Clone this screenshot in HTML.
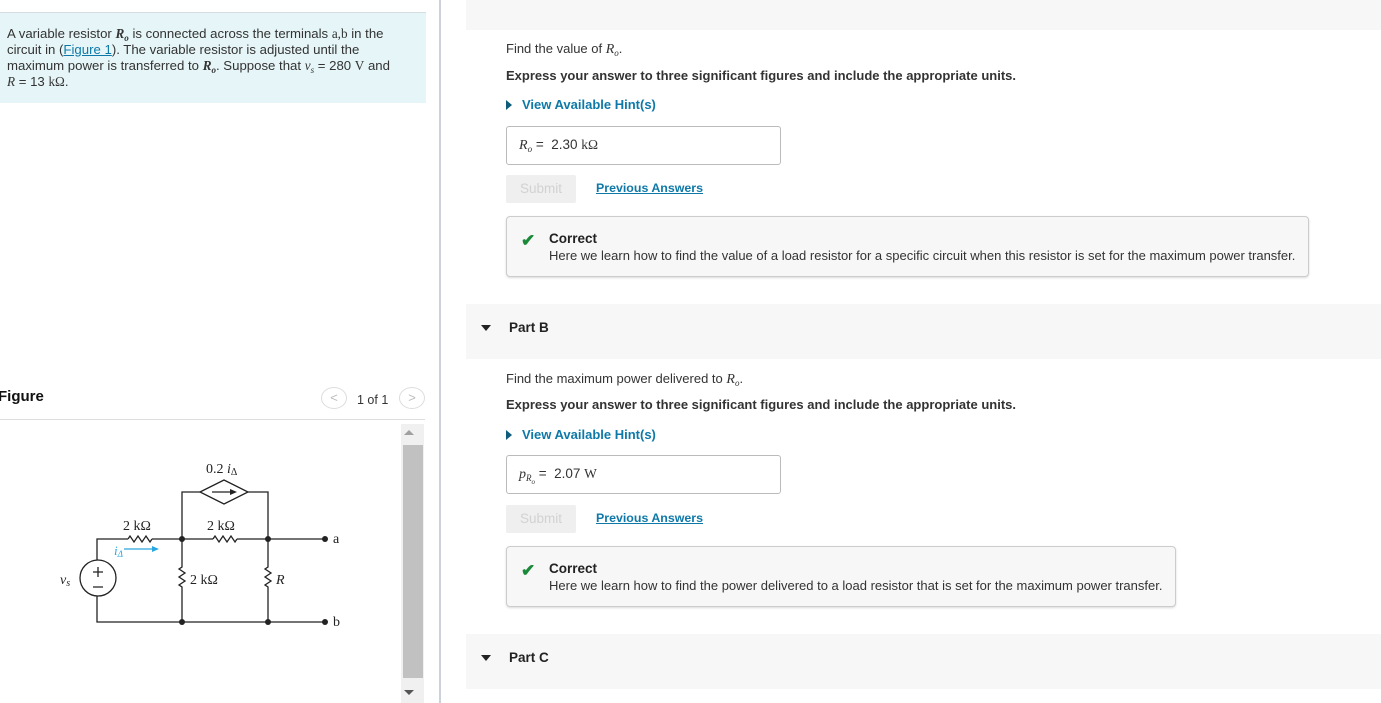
<!DOCTYPE html>
<html><head><meta charset="utf-8"><style>
*{margin:0;padding:0;box-sizing:border-box}
body{width:1381px;height:703px;overflow:hidden;background:#fff;font-family:"Liberation Sans",Arial,sans-serif;color:#333;position:relative}
sub{line-height:0;vertical-align:-3px}
.a{position:absolute;white-space:nowrap}
.m{font-family:"Liberation Serif",serif;font-style:italic}
.ms{font-family:"Liberation Serif",serif}
.intro{position:absolute;left:0;top:12px;width:426px;height:91px;background:#e6f5f7;border-top:1px solid #d5dde0;padding:13px 0 0 7px;font-size:13.2px;line-height:16px;color:#333;white-space:nowrap}
.intro a{color:#0e79a8}
.div{position:absolute;left:439px;top:0;width:2px;height:703px;background:#ccd2da}
.ph{position:absolute;left:466px;width:915px;background:#f7f7f7}
.ph b{position:absolute;left:43px;font-size:13.5px;color:#222}
.tri{position:absolute;left:15px;width:0;height:0;border-left:5px solid transparent;border-right:5px solid transparent;border-top:6px solid #222}
.t{font-size:13px;color:#333}
.bold{font-weight:bold;font-size:13px;color:#333}
.hint{font-size:13px;font-weight:bold;color:#0e79a8}
.hint:before{content:"";display:inline-block;border-top:5px solid transparent;border-bottom:5px solid transparent;border-left:6px solid #0e5c7a;margin-right:10px;vertical-align:-1px}
.inp{position:absolute;left:506px;width:275px;height:39px;border:1px solid #bbb;border-radius:3px;font-size:13.5px;padding:10px 0 0 12px;color:#333}
.sub{position:absolute;left:506px;width:70px;height:28px;background:#efefef;border-radius:2px;color:#d2d2d2;font-size:13.5px;text-align:center;line-height:28px}
.prev{position:absolute;left:596px;font-size:12.4px;font-weight:bold;color:#0e79a8;text-decoration:underline}
.fb{position:absolute;left:506px;height:61px;background:#f7f7f7;border:1px solid #ccc;border-radius:4px;box-shadow:0 1px 2px rgba(0,0,0,.15)}
.fb .ck{position:absolute;left:14px;top:14px;color:#1a8a3a;font-size:17px;font-weight:bold}
.fb b{position:absolute;left:42px;top:14px;font-size:13.5px;color:#222}
.fb span{position:absolute;left:42px;top:31px;font-size:13px;color:#333;white-space:nowrap}
</style></head><body>
<div class="intro">A variable resistor <span class="m" style="font-weight:bold">R<sub style="font-size:9px">o</sub></span> is connected across the terminals <span class="ms">a,b</span> in the<br>circuit in (<a href="#">Figure 1</a>). The variable resistor is adjusted until the<br>maximum power is transferred to <span class="m" style="font-weight:bold">R<sub style="font-size:9px">o</sub></span>. Suppose that <span class="m">v<sub style="font-size:9px">s</sub></span> = 280 <span class="ms">V</span> and<br><span class="m">R</span> = 13 <span class="ms">kΩ</span>.</div>
<div class="div"></div>

<div class="a" style="left:-2px;top:388px;font-size:15px;font-weight:bold;color:#111">Figure</div>
<div class="a" style="left:321px;top:387px;width:26px;height:22px;border:1px solid #ddd;border-radius:50%;color:#bbb;text-align:center;line-height:20px;font-size:13px">&lt;</div>
<div class="a" style="left:357px;top:393px;font-size:12.5px;color:#333">1 of 1</div>
<div class="a" style="left:399px;top:387px;width:26px;height:22px;border:1px solid #ddd;border-radius:50%;color:#bbb;text-align:center;line-height:20px;font-size:13px">&gt;</div>
<div class="a" style="left:0;top:419px;width:425px;height:1px;background:#ddd"></div>
<div class="a" style="left:401px;top:424px;width:23px;height:279px;background:#f0f0f0"></div>
<div class="a" style="left:404px;top:430px;width:0;height:0;border-left:5px solid transparent;border-right:5px solid transparent;border-bottom:5px solid #a0a0a0"></div>
<div class="a" style="left:403px;top:445px;width:20px;height:233px;background:#c1c1c1"></div>
<div class="a" style="left:404px;top:690px;width:0;height:0;border-left:5px solid transparent;border-right:5px solid transparent;border-top:5px solid #555"></div>

<svg class="a" style="left:0;top:440px" width="400" height="263" viewBox="0 440 400 263">
<g stroke="#222" stroke-width="1.3" fill="none">
<path d="M97 560 V539 H128 M152 539 H213 M237 539 H324"/>
<path d="M128 539 l2 -3 l4 6 l4 -6 l4 6 l4 -6 l4 6 l2 -3"/>
<path d="M213 539 l2 -3 l4 6 l4 -6 l4 6 l4 -6 l4 6 l2 -3"/>
<path d="M97 596 V622 H324"/>
<circle cx="98" cy="578" r="18"/>
<path d="M182 539 V492 H200 M248 492 H268 V539"/>
<path d="M200 492 L224 480 L248 492 L224 504 Z"/>
<path d="M182 539 V567 l-3 2 l6 4 l-6 4 l6 4 l-6 4 l3 2 V622"/>
<path d="M268 539 V567 l-3 2 l6 4 l-6 4 l6 4 l-6 4 l3 2 V622"/>
<path d="M98 567 v10 M93 572 h10 M93 587 h10"/>
<path d="M212 492 h20"/>
</g>
<path d="M230 489 l7 3 l-7 3z" fill="#222"/>
<g fill="#222"><circle cx="182" cy="539" r="3"/><circle cx="268" cy="539" r="3"/><circle cx="182" cy="622" r="3"/><circle cx="268" cy="622" r="3"/><circle cx="325" cy="539" r="3"/><circle cx="325" cy="622" r="3"/></g>
<path d="M124 549 H154" stroke="#29a8e0" stroke-width="1.3"/><path d="M152 546 l7 3 l-7 3z" fill="#29a8e0"/>
<g font-family="Liberation Serif,serif" font-size="14" fill="#222">
<text x="206" y="473">0.2 <tspan font-style="italic">i</tspan><tspan font-size="10" dy="2">Δ</tspan></text>
<text x="123" y="530">2 kΩ</text><text x="207" y="530">2 kΩ</text>
<text x="190" y="584">2 kΩ</text>
<text x="276" y="584" font-style="italic">R</text>
<text x="333" y="543">a</text><text x="333" y="626">b</text>
<text x="60" y="584" font-style="italic">v<tspan font-size="10" dy="2">s</tspan></text>
<text x="114" y="555" fill="#29a8e0" font-style="italic" font-size="13">i<tspan font-size="9" dy="2">Δ</tspan></text>
</g>
</svg>

<div class="ph" style="top:0;height:30px"></div>
<div class="a t" style="left:506px;top:41px">Find the value of <span class="m" style="font-size:14px">R<sub style="font-size:9px">o</sub></span>.</div>
<div class="a bold" style="left:506px;top:68px">Express your answer to three significant figures and include the appropriate units.</div>
<div class="a hint" style="left:506px;top:97px">View Available Hint(s)</div>
<div class="inp" style="top:126px"><span class="m" style="font-size:14px">R<sub style="font-size:9px">o</sub></span> = &nbsp;2.30 <span class="ms">kΩ</span></div>
<div class="sub" style="top:175px">Submit</div>
<div class="prev a" style="top:181px">Previous Answers</div>
<div class="fb" style="top:216px;width:803px"><span class="ck">✔</span><b>Correct</b><span>Here we learn how to find the value of a load resistor for a specific circuit when this resistor is set for the maximum power transfer.</span></div>

<div class="ph" style="top:304px;height:55px"><div class="tri" style="top:21px"></div><b style="top:16px">Part B</b></div>
<div class="a t" style="left:506px;top:371px">Find the maximum power delivered to <span class="m" style="font-size:14px">R<sub style="font-size:9px">o</sub></span>.</div>
<div class="a bold" style="left:506px;top:397px">Express your answer to three significant figures and include the appropriate units.</div>
<div class="a hint" style="left:506px;top:427px">View Available Hint(s)</div>
<div class="inp" style="top:455px"><span class="m" style="font-size:14px">p<sub style="font-size:9px">R<sub style="font-size:7px">o</sub></sub></span> = &nbsp;2.07 <span class="ms">W</span></div>
<div class="sub" style="top:505px">Submit</div>
<div class="prev a" style="top:511px">Previous Answers</div>
<div class="fb" style="top:546px;width:670px"><span class="ck">✔</span><b>Correct</b><span>Here we learn how to find the power delivered to a load resistor that is set for the maximum power transfer.</span></div>

<div class="ph" style="top:634px;height:55px"><div class="tri" style="top:21px"></div><b style="top:16px">Part C</b></div>
</body></html>
